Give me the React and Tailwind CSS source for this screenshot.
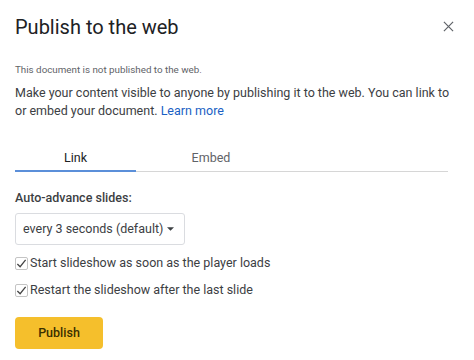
import React from 'react';

const Check = () => (
  <span className="w-[13px] h-[13px] border border-[#c4c4c4] rounded-[2px] bg-white flex items-center justify-center shrink-0">
    <svg viewBox="0 0 12 12" className="w-[11px] h-[11px]" fill="none" stroke="#444" strokeWidth="1.4">
      <path d="M1.5 6.5 L4.5 9.5 L10.5 2" />
    </svg>
  </span>
);

const App = () => {
  return (
    <div className="w-[474px] h-[360px] bg-white text-[#3c4043] font-['Roboto',sans-serif] overflow-hidden">
      {/* Header */}
      <div className="flex items-start justify-between pl-[15px] pr-[20px] pt-[13px]">
        <h1 className="text-[20px] leading-[28px] text-[#202124]">Publish to the web</h1>
        <button className="mt-[8px] text-[#5f6368]">
          <svg viewBox="0 0 12 12" className="w-[11px] h-[11px]" stroke="currentColor" strokeWidth="1.3">
            <path d="M1 1 L11 11 M11 1 L1 11" />
          </svg>
        </button>
      </div>

      <div className="px-[15px]">
        <p className="mt-[22px] text-[9.8px] leading-[13px] text-[#5f6368]">This document is not published to the web.</p>
        <p className="mt-[8px] text-[12.5px] leading-[18px] text-[#3c4043]">
          Make your content visible to anyone by publishing it to the web. You can link to or embed your document.{' '}
          <span className="text-[#1a5fc4]">Learn more</span>
        </p>

        {/* Tabs */}
        <div className="mt-[30px] w-[433px] flex border-b border-[#d6d6d6]">
          <div className="w-[121px] text-center text-[12.5px] leading-[16px] pb-[4px] text-[#202124] border-b-2 border-[#5b8fd9] -mb-px">Link</div>
          <div className="w-[150px] text-center text-[12.5px] leading-[16px] pb-[4px] text-[#5f6368]">Embed</div>
        </div>

        <p className="mt-[18px] text-[12.5px] leading-[16px] font-medium text-[#3c4043]">Auto-advance slides:</p>

        <div className="mt-[7px] w-[170px] h-[32px] border border-[#dadce0] rounded-[3px] flex items-center justify-between pl-[7px] pr-[10px]">
          <span className="text-[12.5px] whitespace-nowrap text-[#3c4043]">every 3 seconds (default)</span>
          <svg viewBox="0 0 8 4" className="w-[7px] h-[4px]" fill="#3c4043">
            <path d="M0 0 L8 0 L4 4 Z" />
          </svg>
        </div>

        <label className="mt-[10px] flex items-center gap-[2px] text-[12.5px] leading-[16px]">
          <Check />
          <span>Start slideshow as soon as the player loads</span>
        </label>
        <label className="mt-[11px] flex items-center gap-[2px] text-[12.5px] leading-[16px]">
          <Check />
          <span>Restart the slideshow after the last slide</span>
        </label>

        <button className="mt-[19px] w-[88px] h-[32px] rounded-[4px] bg-[#f5bf2c] text-[12.5px] font-medium text-[#3c3000]">Publish</button>
      </div>
    </div>
  );
};

export default App;
